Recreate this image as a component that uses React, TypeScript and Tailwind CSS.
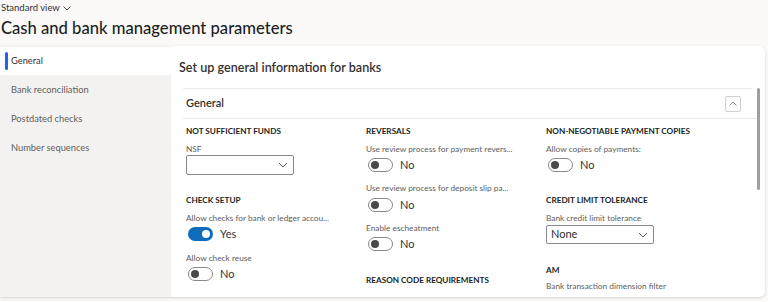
import React from "react"

const font = { fontFamily: 'Lato, "Noto Sans", sans-serif' }

function Toggle({ on }: { on?: boolean }) {
  return (
    <div className="flex items-center h-[16px]">
      {on ? (
        <div className="w-[25px] h-[14px] rounded-full bg-[#0f6cbd] flex items-center justify-end pr-[3px]">
          <div className="w-[8px] h-[8px] rounded-full bg-white" />
        </div>
      ) : (
        <div className="w-[25px] h-[14px] rounded-full border border-[#8a8886] flex items-center pl-[2px]">
          <div className="w-[8px] h-[8px] rounded-full bg-[#4a4a4a]" />
        </div>
      )}
      <span className="ml-[7px] text-[11px] text-[#323130]">{on ? "Yes" : "No"}</span>
    </div>
  )
}

function Heading({ children, className = "" }: { children: React.ReactNode; className?: string }) {
  return (
    <div className={`h-[12px] flex items-center text-[8.2px] font-bold text-[#201f1e] ${className}`}>
      {children}
    </div>
  )
}

function Label({ children, className = "" }: { children: React.ReactNode; className?: string }) {
  return (
    <div className={`h-[12px] flex items-center text-[8.3px] text-[#605e5c] whitespace-nowrap ${className}`}>
      {children}
    </div>
  )
}

function Select({ value, className = "" }: { value?: string; className?: string }) {
  return (
    <div
      className={`w-[108px] border border-[#8a8886] rounded-[2px] flex items-center justify-between pl-[4px] pr-[5px] bg-white ${className}`}
    >
      <span className="text-[11px] text-[#323130]">{value}</span>
      <svg width="10" height="6" viewBox="0 0 10 6" fill="none">
        <path d="M1 1l4 4 4-4" stroke="#605e5c" strokeWidth="1" />
      </svg>
    </div>
  )
}

const navItems = ["General", "Bank reconciliation", "Postdated checks", "Number sequences"]

export default function App() {
  return (
    <div className="w-[768px] h-[302px] bg-[#faf9f8] overflow-hidden" style={font}>
      <div className="h-[16px] flex items-center pl-[1px] text-[9.5px] text-[#323130]">
        Standard view
        <svg className="ml-[3px]" width="8" height="5" viewBox="0 0 8 5" fill="none">
          <path d="M0.5 0.5l3.5 3.5 3.5-3.5" stroke="#323130" strokeWidth="0.9" />
        </svg>
      </div>
      <div className="h-[24px] flex items-center pl-[1px] text-[16.6px] font-medium text-[#201f1e] leading-none">
        Cash and bank management parameters
      </div>

      <div className="mt-[6px] w-[765px] h-[251px] flex rounded-r-[6px] overflow-hidden shadow-[0_1px_3px_rgba(0,0,0,0.15)] bg-white">
        {/* left nav */}
        <div className="w-[171px] bg-[#f3f2f1] pt-[1px] flex flex-col">
          {navItems.map((item, i) => (
            <div
              key={item}
              className={`h-[28px] flex items-center relative pl-[11px] text-[9.3px] ${
                i === 0 ? "bg-white text-[#323130] rounded-[2px]" : "text-[#605e5c]"
              } ${i > 0 ? "mt-[1px]" : ""}`}
            >
              {i === 0 && <div className="absolute left-[5px] top-[5px] w-[2.5px] h-[18px] rounded-full bg-[#2266e3]" />}
              {item}
            </div>
          ))}
        </div>

        {/* right content */}
        <div className="flex-1 relative">
          <div className="h-[42px] flex items-center pl-[8px] pt-[2px] text-[12.6px] font-semibold text-[#323130]">
            Set up general information for banks
          </div>
          <div className="ml-[12px] mr-[13px] border-t border-[#edebe9]" />
          <div className="ml-[12px] mr-[8px] h-[29px] flex items-center justify-between pl-[3px] pr-[16px]">
            <span className="text-[11px] font-semibold text-[#323130]">General</span>
            <div className="w-[16px] h-[16px] border border-[#d2d0ce] rounded-[2px] flex items-center justify-center">
              <svg width="8" height="5" viewBox="0 0 8 5" fill="none">
                <path d="M0.5 4.5l3.5-3.5 3.5 3.5" stroke="#8a8886" strokeWidth="0.9" />
              </svg>
            </div>
          </div>
          <div className="ml-[12px] mr-[8px] border-t border-[#edebe9]" />

          <div className="flex pl-[15px]">
            {/* column 1 */}
            <div className="w-[180px] flex flex-col pt-[6px]">
              <Heading>NOT SUFFICIENT FUNDS</Heading>
              <Label className="mt-[6px]">NSF</Label>
              <Select className="h-[20px]" />
              <Heading className="mt-[19px]">CHECK SETUP</Heading>
              <Label className="mt-[6px]">Allow checks for bank or ledger accou...</Label>
              <div className="mt-[2px] pl-[2px]"><Toggle on /></div>
              <Label className="mt-[10px]">Allow check reuse</Label>
              <div className="mt-[2px] pl-[2px]"><Toggle /></div>
            </div>

            {/* column 2 */}
            <div className="w-[180px] flex flex-col pt-[6px]">
              <Heading>REVERSALS</Heading>
              <Label className="mt-[6px]">Use review process for payment revers...</Label>
              <div className="mt-[2px] pl-[2px]"><Toggle /></div>
              <Label className="mt-[9px]">Use review process for deposit slip pa...</Label>
              <div className="mt-[3px] pl-[2px]"><Toggle /></div>
              <Label className="mt-[9px]">Enable escheatment</Label>
              <div className="mt-[2px] pl-[2px]"><Toggle /></div>
              <Heading className="mt-[22px]">REASON CODE REQUIREMENTS</Heading>
            </div>

            {/* column 3 */}
            <div className="w-[180px] flex flex-col pt-[6px]">
              <Heading>NON-NEGOTIABLE PAYMENT COPIES</Heading>
              <Label className="mt-[6px]">Allow copies of payments:</Label>
              <div className="mt-[2px] pl-[2px]"><Toggle /></div>
              <Heading className="mt-[21px]">CREDIT LIMIT TOLERANCE</Heading>
              <Label className="mt-[6px]">Bank credit limit tolerance</Label>
              <Select value="None" className="mt-[1px] h-[19px]" />
              <Heading className="mt-[20px]">AM</Heading>
              <Label className="mt-[4px]">Bank transaction dimension filter</Label>
            </div>
          </div>

          {/* scrollbar */}
          <div className="absolute right-[5px] top-[42px] w-[3px] h-[102px] rounded-full bg-[#a19f9d]" />
        </div>
      </div>
    </div>
  )
}
